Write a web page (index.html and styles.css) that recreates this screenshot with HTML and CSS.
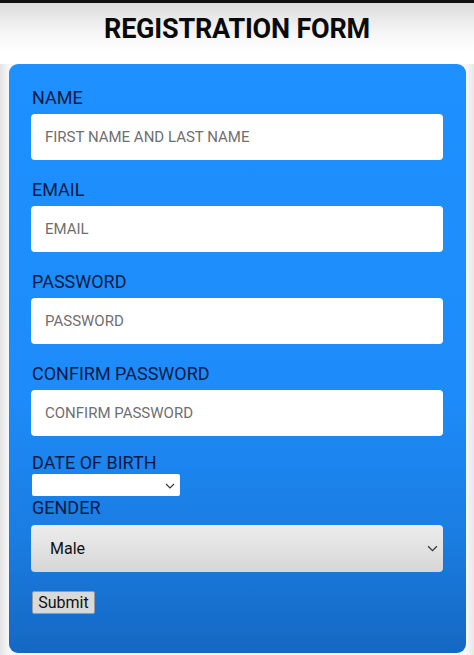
FILE: index.html
```html
<!DOCTYPE html>
<html lang="en">
<head>
<meta charset="utf-8">
<title>Registration Form</title>
<link rel="stylesheet" href="styles.css">
</head>
<body>
<header class="top">
  <h1 class="title">REGISTRATION FORM</h1>
</header>
<main class="card">
  <form class="form">
    <label class="label" for="name">NAME</label>
    <input class="field" id="name" type="text" placeholder="FIRST NAME AND LAST NAME">

    <label class="label" for="email">EMAIL</label>
    <input class="field" id="email" type="email" placeholder="EMAIL">

    <label class="label" for="pw">PASSWORD</label>
    <input class="field" id="pw" type="password" placeholder="PASSWORD">

    <label class="label" for="cpw">CONFIRM PASSWORD</label>
    <input class="field" id="cpw" type="password" placeholder="CONFIRM PASSWORD">

    <label class="label label-tight" for="dob">DATE OF BIRTH</label>
    <div class="select-wrap select-small">
      <select class="dob" id="dob"><option></option></select>
      <svg class="chev chev-small" viewBox="0 0 10 6" aria-hidden="true"><path d="M1 1 L5 5 L9 1" fill="none" stroke="#333" stroke-width="1.1"/></svg>
    </div>

    <label class="label label-gender" for="gender">GENDER</label>
    <div class="select-wrap select-big">
      <select class="gender" id="gender"><option>Male</option><option>Female</option></select>
      <svg class="chev chev-big" viewBox="0 0 10 6" aria-hidden="true"><path d="M1 1 L5 5 L9 1" fill="none" stroke="#333" stroke-width="1.1"/></svg>
    </div>

    <button class="submit" type="button">Submit</button>
  </form>
</main>
</body>
</html>
```

FILE: styles.css
```css
* { box-sizing: border-box; }

html, body {
  margin: 0;
  padding: 0;
}

body {
  width: 474px;
  height: 655px;
  overflow: hidden;
  background: linear-gradient(90deg, #e4e4e4 0px, #f7f7f7 9px, #ffffff 30px, #ffffff 444px, #f7f7f7 466px, #e8e8e8 474px);
  border-top: 3px solid #111;
  font-family: Roboto, "Liberation Sans", sans-serif;
}

.top {
  height: 61px;
  background: linear-gradient(180deg, #dcdcdc 0%, #f4f4f4 45%, #ffffff 80%);
  display: flex;
  justify-content: center;
}

.title {
  margin: 9px 0 0 0;
  font-size: 27px;
  line-height: 34px;
  font-weight: 700;
  color: #0a0a0a;
  letter-spacing: -0.2px;
}

.card {
  margin: 0 8px 0 9px;
  height: 589px;
  border-radius: 9px;
  background: linear-gradient(180deg, #1e90ff 0%, #1d8cfa 55%, #1a7de2 80%, #1568c2 100%);
  padding: 24px 23px 0 22px;
}

.form {
  display: flex;
  flex-direction: column;
  align-items: flex-start;
}

.label {
  font-size: 18px;
  line-height: 20px;
  color: #0c1a45;
  margin-bottom: 6px;
  padding-left: 1px;
}

.field {
  width: 412px;
  height: 46px;
  border: none;
  border-radius: 4px;
  background: #ffffff;
  padding: 0 14px;
  margin-bottom: 20px;
  font-family: Roboto, "Liberation Sans", sans-serif;
  font-size: 15px;
  color: #333;
  outline: none;
}

.field::placeholder {
  color: #6f6f6f;
}

.label-tight {
  margin-top: -3px;
  margin-bottom: 1px;
}

.select-wrap {
  position: relative;
}

.select-small {
  width: 148px;
  height: 22px;
  margin-left: 1px;
}

.dob {
  appearance: none;
  -webkit-appearance: none;
  width: 148px;
  height: 22px;
  border: none;
  border-radius: 2px;
  background: #ffffff;
  font-family: Roboto, "Liberation Sans", sans-serif;
  display: block;
}

.chev {
  position: absolute;
  pointer-events: none;
}

.chev-small {
  width: 10px;
  height: 6px;
  right: 5px;
  top: 9px;
}

.label-gender {
  margin-top: 2px;
  margin-bottom: 7px;
}

.select-big {
  width: 412px;
  height: 47px;
}

.gender {
  appearance: none;
  -webkit-appearance: none;
  display: block;
  width: 412px;
  height: 47px;
  border: none;
  border-radius: 4px;
  background: linear-gradient(180deg, #ececec 0%, #e2e2e2 50%, #d6d6d6 100%);
  padding: 0 0 0 19px;
  font-family: Roboto, "Liberation Sans", sans-serif;
  font-size: 16px;
  color: #111;
}

.chev-big {
  width: 11px;
  height: 7px;
  right: 5px;
  top: 20px;
}

.submit {
  margin-top: 19px;
  margin-left: 1px;
  width: 63px;
  height: 23px;
  padding: 0;
  border: 1px solid #9a9a9a;
  border-radius: 2px;
  background: #d9d9d9;
  font-family: Roboto, "Liberation Sans", sans-serif;
  font-size: 16px;
  color: #111;
}
```
